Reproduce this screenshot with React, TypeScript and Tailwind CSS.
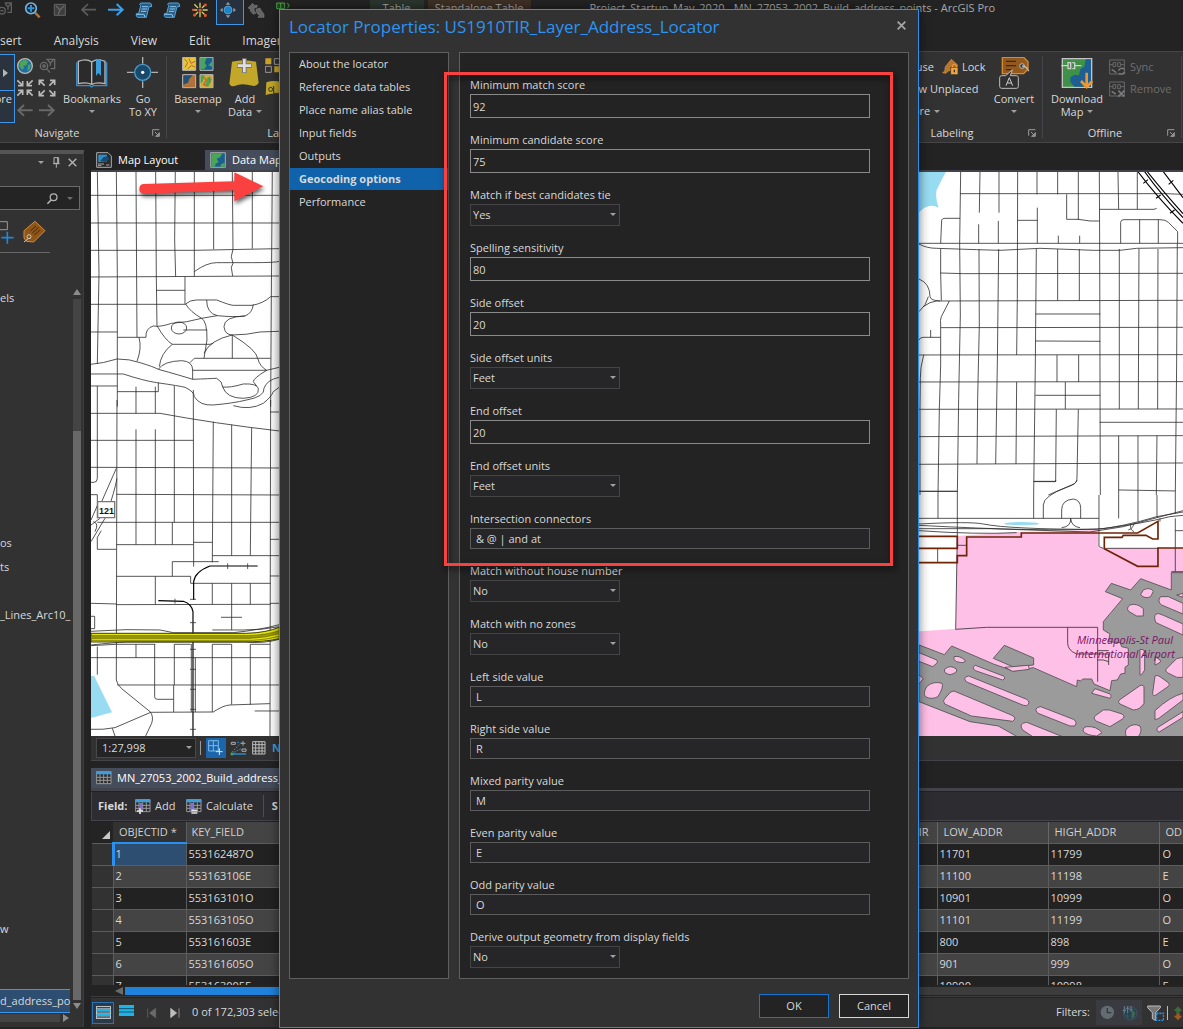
import type { ReactNode } from 'react';
import { clsx } from 'clsx';

const NAV_ITEMS = [
  'About the locator',
  'Reference data tables',
  'Place name alias table',
  'Input fields',
  'Outputs',
  'Geocoding options',
  'Performance',
];

type Field = { label: string; value: string; kind: 'number' | 'select' | 'text' };

const FIELDS: Field[] = [
  { label: 'Minimum match score', value: '92', kind: 'number' },
  { label: 'Minimum candidate score', value: '75', kind: 'number' },
  { label: 'Match if best candidates tie', value: 'Yes', kind: 'select' },
  { label: 'Spelling sensitivity', value: '80', kind: 'number' },
  { label: 'Side offset', value: '20', kind: 'number' },
  { label: 'Side offset units', value: 'Feet', kind: 'select' },
  { label: 'End offset', value: '20', kind: 'number' },
  { label: 'End offset units', value: 'Feet', kind: 'select' },
  { label: 'Intersection connectors', value: '& @ | and at', kind: 'text' },
  { label: 'Match without house number', value: 'No', kind: 'select' },
  { label: 'Match with no zones', value: 'No', kind: 'select' },
  { label: 'Left side value', value: 'L', kind: 'text' },
  { label: 'Right side value', value: 'R', kind: 'text' },
  { label: 'Mixed parity value', value: 'M', kind: 'text' },
  { label: 'Even parity value', value: 'E', kind: 'text' },
  { label: 'Odd parity value', value: 'O', kind: 'text' },
  { label: 'Derive output geometry from display fields', value: 'No', kind: 'select' },
];

const ROWS = [
  ['1', '553162487O', '11701', '11799', 'O'],
  ['2', '553163106E', '11100', '11198', 'E'],
  ['3', '553163101O', '10901', '10999', 'O'],
  ['4', '553163105O', '11101', '11199', 'O'],
  ['5', '553161603E', '800', '898', 'E'],
  ['6', '553161605O', '901', '999', 'O'],
  ['7', '553163005E', '10900', '10998', 'E'],
];

function Caret({ className }: { className?: string }) {
  return (
    <svg viewBox="0 0 6 3" className={clsx('h-[3px] w-[6px] fill-[#a0a0a0]', className)}>
      <path d="M0 0h6L3 3z" />
    </svg>
  );
}

// Every icon is drawn on a grid three times finer than its size on screen.
function Icon({ box, className, children }: { box: string; className: string; children: ReactNode }) {
  return (
    <svg viewBox={box} className={clsx('block shrink-0', className)} fill="none">
      {children}
    </svg>
  );
}

function Scroll({ dx }: { dx: number }) {
  return (
    <g transform={`translate(${dx} 0)`}>
      <path d="M422 9h28q6 1 5 11h-8l-8 32h-26q-6-1-4-11h7l6-24q-6-3 0-8z" fill="#2b5c82" stroke="#4aa6e6" strokeWidth="3" />
      <path d="M426 20h18M425 27h17M423 34h16M410 43h22l3 8" stroke="#8fc8ee" strokeWidth="3" />
    </g>
  );
}

const QUICK_ICONS: { label: string; art: ReactNode }[] = [
  {
    label: 'Zoom to selection',
    art: (
      <g stroke="#5f5f5f" strokeWidth="4">
        <path d="M14 9h20v28h-12" />
        <path d="M16 12l8 9 8-9M24 21v9" />
        <circle cx="6" cy="32" r="10" />
        <path d="M1 32h10" />
      </g>
    ),
  },
  {
    label: 'Zoom in',
    art: (
      <g>
        <path d="M105 38l14 14" stroke="#b27536" strokeWidth="7" />
        <circle cx="93" cy="25" r="16" fill="#232323" stroke="#6fb5e4" strokeWidth="5" />
        <path d="M93 15v20M83 25h20" stroke="#2d95e0" strokeWidth="6" />
      </g>
    ),
  },
  {
    label: 'Full extent',
    art: (
      <g stroke="#666" strokeWidth="3">
        <path d="M163 13h33v33h-33z" fill="#3d3d3d" />
        <path d="M168 18l12 12 12-12M180 30l-6 14" strokeWidth="4" />
      </g>
    ),
  },
  { label: 'Previous extent', art: <path d="M288 29h-42M264 12l-18 17 18 17" stroke="#5c5c5c" strokeWidth="5" /> },
  { label: 'Next extent', art: <path d="M324 29h44M350 12l18 17-18 17" stroke="#3ba0e8" strokeWidth="6" /> },
  { label: 'Run script', art: <Scroll dx={0} /> },
  { label: 'Run model', art: <Scroll dx={84} /> },
  {
    label: 'Explode',
    art: (
      <g>
        <path d="M600 8v15M600 35v17M578 30h14M608 30h15M583 13l11 11M606 36l12 12M617 13l-11 11M594 36l-12 12" stroke="#d8cf6a" strokeWidth="4" />
        <path d="M596 26h9v9h-9zM612 11h8v8h-8zM580 41h8v8h-8zM577 26h7v7h-7zM612 42h8v8h-8z" fill="#e2572b" />
      </g>
    ),
  },
  {
    label: 'Explore',
    art: (
      <g>
        <circle cx="684" cy="30" r="12" fill="#1c84c8" stroke="#65b4e6" strokeWidth="2" />
        <path d="M684 6l7 8h-14zM684 54l7-8h-14zM660 30l8-7v14zM708 30l-8-7v14z" fill="#9a9a9a" />
      </g>
    ),
  },
  {
    label: 'Undo',
    art: (
      <g fill="#646464" stroke="#777" strokeWidth="2">
        <path d="M744 24l14-14 4 6h10l-2 7h-7l-1 8 6 8-8 4-8-9-2-8z" />
        <path d="M768 28l12-4 2 5 10 14v9h-18l4-6q-8-2-10-18z" />
      </g>
    ),
  },
  {
    label: 'Open table',
    art: <path d="M830 9h24v17h-24zM842 9v17M862 9l6 8-6 8" fill="#22481f" stroke="#4d9e4a" strokeWidth="3" />,
  },
];

function QuickAccess() {
  return (
    <div className="-ml-2 flex">
      {QUICK_ICONS.map((item, i) => (
        <button
          key={item.label}
          aria-label={item.label}
          className={clsx('h-[25px] w-7', i === 8 && 'border border-t-0 border-[#3d96ea] bg-[#27313d]')}
        >
          <Icon box={`${-24 + 84 * i} 0 84 75`} className={clsx('h-[25px] w-7', i === 8 && '-mx-px')}>
            {item.art}
          </Icon>
        </button>
      ))}
    </div>
  );
}

function BigButton({ label, second, caret, className, children }: {
  label: string;
  second?: string;
  caret?: boolean;
  className: string;
  children: ReactNode;
}) {
  return (
    <button className={clsx('flex shrink-0 flex-col items-center pt-[5px] leading-[13px] whitespace-nowrap', className)}>
      {children}
      <span className="mt-[3px]">{label}</span>
      <span className="flex h-[13px] items-center gap-1">
        {second}
        {caret && <Caret />}
      </span>
    </button>
  );
}

function RibbonGroup({ label, className, children }: { label: string; className: string; children: ReactNode }) {
  return (
    <section className={clsx('flex shrink-0 flex-col', className)}>
      <div className="flex h-[73px] justify-end">{children}</div>
      <div className="flex h-[18px] items-center">
        <h3 className="flex-1 text-center">{label}</h3>
        <Icon box="0 0 24 24" className="mr-1.5 h-2 w-2">
          <path d="M2 20V2h20M22 10v12H10M9 9l10 10M20 12v8h-8" stroke="#9a9a9a" strokeWidth="3" />
        </Icon>
      </div>
    </section>
  );
}

function Divider() {
  return <div className="my-1 w-px shrink-0 bg-[#47474b]" />;
}

function Ribbon() {
  return (
    <div className="flex h-[92px] shrink-0 overflow-hidden border-y border-[#464648] bg-[#323232] text-[11px]">
      <RibbonGroup label="Navigate" className="-ml-[38px] w-[204px]">
        <button className="mt-0.5 flex h-[69px] w-[46px] shrink-0 flex-col border border-[#3d96ea] bg-[#2a333e]">
          <span className="flex h-9 w-full items-center justify-end border-b border-[#3d96ea] pr-1.5">
            <Icon box="0 0 15 24" className="h-2 w-[5px]">
              <path d="M0 0l15 12L0 24z" fill="#b5b5b5" />
            </Icon>
          </span>
          <span className="w-full pr-0.5 text-right leading-4">ore</span>
        </button>
        <div className="mt-1 grid shrink-0 grid-cols-[22px_22px] grid-rows-[22px_22px_22px]">
          <Icon box="45 168 66 66" className="h-[22px] w-[22px]">
            <circle cx="75" cy="198" r="22" fill="#1f6da3" stroke="#b9b9b9" strokeWidth="4" />
            <path d="M60 187l12-8 12 4-4 12-10 2 2 8-6 4-8-10zM84 196l8-4-2 14-8 8z" fill="#4fa557" />
          </Icon>
          <Icon box="111 168 66 66" className="h-[22px] w-[22px]">
            <g stroke="#6a6a6a" strokeWidth="4">
              <path d="M138 178h26v28h-12M143 180l8 9 9-9M151 189v8" />
              <circle cx="132" cy="198" r="11" fill="#323232" />
              <path d="M126 198h12M132 192v12M140 206l10 12" />
            </g>
          </Icon>
          <Icon box="45 234 66 66" className="h-[22px] w-[22px]">
            <path d="M52 241l14 14M68 243v14H54M98 241l-14 14M82 243v14h14M52 287l14-14M68 285v-14H54M98 287l-14-14M82 285v-14h14" stroke="#b9b9b9" strokeWidth="5" />
          </Icon>
          <Icon box="111 234 66 66" className="h-[22px] w-[22px]">
            <path d="M134 257l-14-14M118 255v-14h14M148 257l14-14M164 255v-14h-14M134 271l-14 14M118 273v14h14M148 271l14 14M164 273v14h-14" stroke="#b9b9b9" strokeWidth="5" />
          </Icon>
          <Icon box="45 300 66 66" className="h-[22px] w-[22px]">
            <path d="M98 331H54M72 315l-17 16 17 16" stroke="#686868" strokeWidth="6" />
          </Icon>
          <Icon box="111 300 66 66" className="h-[22px] w-[22px]">
            <path d="M117 331h44M144 315l17 16-17 16" stroke="#686868" strokeWidth="6" />
          </Icon>
        </div>
        <BigButton label="Bookmarks" caret className="w-[66px]">
          <Icon box="228 171 96 96" className="h-8 w-8">
            <path d="M230 187v70h40l5 4 5-4h40v-70" stroke="#3a8dc9" strokeWidth="4" />
            <path d="M235 184q24-10 40 2 16-12 40-2v67q-24-6-40 2-16-8-40-2zM275 186v66" fill="#2b2b2b" stroke="#b9b9b9" strokeWidth="4" />
            <path d="M288 177h15v51l-8-9-7 9z" fill="#3d9edb" />
          </Icon>
        </BigButton>
        <BigButton label="Go" second="To XY" className="mr-[5px] w-[36px]">
          <Icon box="381 171 96 96" className="h-8 w-8">
            <path d="M428 171v20M428 244v20M381 217h20M454 217h20" stroke="#b0b0b0" strokeWidth="4" />
            <circle cx="428" cy="217" r="24" fill="#1a4a6b" stroke="#4a9cd0" strokeWidth="4" />
            <circle cx="428" cy="217" r="5" fill="#fff" />
          </Icon>
        </BigButton>
      </RibbonGroup>
      <Divider />
      <section className="flex w-[112px] shrink-0 flex-col">
        <div className="flex h-[73px] gap-0.5 pl-1">
          <BigButton label="Basemap" caret className="w-[54px]">
            <Icon box="545 171 96 96" className="h-8 w-8">
              <path d="M547 172h39v39h-39z" fill="#e5c53c" stroke="#b9b9b9" strokeWidth="3" />
              <path d="M552 176l10 12-8 14M566 176l6 14 12-6M562 206l12-10 10 6" stroke="#c5622d" strokeWidth="3" />
              <path d="M599 172h39v39h-39z" fill="#1b5f8f" stroke="#b9b9b9" strokeWidth="3" />
              <path d="M601 174h18l-6 14 6 10-8 10h-10zM624 196l12-12v16z" fill="#4aa657" />
              <path d="M547 224h39v39h-39z" fill="#b3713a" stroke="#b9b9b9" strokeWidth="3" />
              <path d="M549 226h28l-10 10-4 12-14 6z" fill="#244f70" />
              <path d="M599 224h39v39h-39z" fill="#cfae35" stroke="#b9b9b9" strokeWidth="3" />
              <path d="M601 226h12l-6 20-6 4zM622 230l12 8-10 22-8-6z" fill="#4aa657" />
              <path d="M612 232l6 8-8 14 12 4M628 230v20" stroke="#c5622d" strokeWidth="4" />
            </Icon>
          </BigButton>
          <BigButton label="Add" second="Data" caret className="w-[36px]">
            <Icon box="687 171 96 96" className="h-8 w-8">
              <path d="M696 185q34-9 72 0l8 64q-8 12-18 8-34-9-52 0-12 6-18-6z" fill="#c2a728" />
              <path d="M733 175v44M711 197h44" stroke="#777" strokeWidth="14" />
              <path d="M733 177v40M713 197h40" stroke="#dedede" strokeWidth="8" />
            </Icon>
          </BigButton>
          <Icon box="798 171 48 120" className="mt-[5px] h-10 w-4">
            <path d="M799 175h18v18h-18zM826 199h18v18h-18z" fill="#c9a42a" />
            <path d="M826 176h18v17h-18zM799 199h18v18h-18z" stroke="#9a9a9a" strokeWidth="3" />
            <path d="M802 247q24-8 44 0v36q-24-6-46 2z" fill="#c2a728" />
            <circle cx="815" cy="268" r="6" stroke="#333" strokeWidth="3" />
            <path d="M824 258v22h22" stroke="#333" strokeWidth="3" />
          </Icon>
        </div>
        <h3 className="flex h-[18px] items-center justify-end">La</h3>
      </section>

      <div className="flex-1" />

      <RibbonGroup label="Labeling" className="w-[166px]">
        <div className="mt-1 flex w-[99px] shrink-0 flex-col whitespace-nowrap">
          <div className="flex h-[22px] items-center">
            <button className="w-[52px] pl-3.5 text-left">Pause</button>
            <button className="flex items-center gap-[3px]">
              <Icon box="120 172 54 54" className="h-[18px] w-[18px]">
                <path d="M133 198l18-22 18 16v18h-26l-8 8-10-2 6-4z" fill="#b9752b" stroke="#d79a55" strokeWidth="2" />
                <path d="M149 200h22v22h-22z" fill="#f0a63c" stroke="#323232" strokeWidth="2" />
                <path d="M154 200v-6q6-8 12 0v6" stroke="#f0a63c" strokeWidth="3" />
                <path d="M160 207v8" stroke="#333" strokeWidth="4" />
              </Icon>
              Lock
            </button>
          </div>
          <button className="h-[22px] pl-3.5 text-left">View Unplaced</button>
          <button className="flex h-[23px] items-center gap-1 pl-3.5">
            More <Caret />
          </button>
        </div>
        <BigButton label="Convert" caret className="mr-0.5 w-[52px]">
          <Icon box="294 171 96 96" className="h-8 w-8">
            <path d="M307 172h64l13 13v22l-13 14h-64z" fill="#93591d" stroke="#d68a32" strokeWidth="4" />
            <path d="M318 184h30M318 197h30M318 209h18" stroke="#3a2a17" strokeWidth="4" />
            <circle cx="366" cy="198" r="7" fill="#323232" stroke="#bbb" strokeWidth="3" />
            <path d="M366 198q14 0 20 16" stroke="#bbb" strokeWidth="4" />
            <path d="M305 227h12l20-18-6 18h18q6 0 6 6v26q0 6-6 6h-44q-6 0-6-6v-26q0-6 6-6z" fill="#303030" stroke="#bdbdbd" strokeWidth="3" />
            <path d="M318 257l10-24 10 24M322 249h12" stroke="#cfcfcf" strokeWidth="3" />
          </Icon>
        </BigButton>
      </RibbonGroup>
      <Divider />
      <RibbonGroup label="Offline" className="w-[138px]">
        <BigButton label="Download" second="Map" caret className="w-[62px]">
          <Icon box="483 171 96 96" className="h-8 w-8">
            <path d="M487 176h88v86h-88z" fill="#3f9147" stroke="#c4c4c4" strokeWidth="4" />
            <path d="M573 178v82h-50l-12-14v-14l12-8 14 2 4-18 12-8 4-22z" fill="#1d5f93" />
            <path d="M484 197h20M504 188h8v18h-8zM512 188v18M524 188v18h-7M524 188h-7M524 197h20" stroke="#d0d0d0" strokeWidth="4" />
            <path d="M560 218v40M543 243l17 18 17-18" stroke="#f0962c" strokeWidth="8" />
          </Icon>
        </BigButton>
        <div className="mt-1 flex w-[73px] shrink-0 flex-col text-[#6e6e6e]">
          {['Sync', 'Remove'].map((label) => (
            <button key={label} disabled className="flex h-[22px] items-center gap-1">
              <Icon box="627 170 54 54" className="h-[18px] w-[18px]">
                <path d="M632 176h44v42h-44zM630 190h12M642 184v12h8v-12zM656 184h8v12h-8zM664 190h12" stroke="#696969" strokeWidth="3" />
                {label === 'Sync' ? (
                  <path d="M658 208q8-12 18-4M678 212q-8 10-18 4M638 204l14 10" stroke="#7a7a7a" strokeWidth="4" />
                ) : (
                  <path d="M658 202l18 18M676 202l-18 18M638 204l12 8" stroke="#7a7a7a" strokeWidth="5" />
                )}
              </Icon>
              {label}
            </button>
          ))}
        </div>
      </RibbonGroup>
      <Divider />
      <div className="w-px shrink-0" />
    </div>
  );
}

function ContentsPane() {
  return (
    <aside className="flex w-[84px] shrink-0 flex-col overflow-hidden border-t-4 border-r border-t-[#555] border-r-[#3d3d3d] bg-[#323232]">
      <div className="flex h-4 items-center justify-end gap-1.5 pr-1.5">
        <Caret className="h-1 w-2" />
        <Icon box="150 468 36 36" className="h-3 w-3">
          <path d="M162 473h14v17h-14zM159 491h20M169 491v12M173 474v16" stroke="#b5b5b5" strokeWidth="3" />
        </Icon>
        <button aria-label="Close pane">
          <Icon box="0 0 27 27" className="h-[9px] w-[9px]">
            <path d="M2 2l23 23M25 2L2 25" stroke="#b5b5b5" strokeWidth="4" />
          </Icon>
        </button>
      </div>
      <div className="mt-4 mr-[3px] flex h-6 items-center justify-end gap-2 border border-l-0 border-[#6a6a6a] bg-[#242424] pr-1.5">
        <input aria-label="Search contents" className="w-full min-w-0 bg-transparent outline-none" />
        <Icon box="139 155 39 42" className="h-[13px] w-[13px]">
          <circle cx="162" cy="172" r="11" stroke="#b5b5b5" strokeWidth="4" />
          <path d="M154 181l-12 12" stroke="#b5b5b5" strokeWidth="5" />
        </Icon>
        <Caret className="shrink-0 opacity-60" />
      </div>
      <div className="mt-2 flex h-[35px] w-[50px] border-b border-[#666]">
        <Icon box="0 234 144 84" className="h-7 w-12">
          <path d="M0 245h22v24H0" stroke="#9a9a9a" strokeWidth="3" />
          <path d="M22 275v36M4 293h37" stroke="#2586d6" strokeWidth="5" />
          <path d="M72 272l33-28 30 28-34 34-22-2-7-10z" fill="#8f5618" stroke="#cf8a3c" strokeWidth="3" />
          <path d="M92 272l16-14M97 279l18-16M103 285l16-14" stroke="#3a2a17" strokeWidth="3" />
          <circle cx="87" cy="290" r="6" stroke="#c9c9c9" strokeWidth="3" />
          <path d="M84 296l-12 10" stroke="#c9c9c9" strokeWidth="3" />
        </Icon>
      </div>
      <div className="flex min-h-0 flex-1">
        <ul className="w-[70px] shrink-0 pt-[33px] leading-6 whitespace-nowrap">
          <li className="h-6">els</li>
          <li className="mt-[221px] h-6">os</li>
          <li className="h-6">ts</li>
          <li className="mt-6 h-6">_Lines_Arc10_</li>
          <li className="mt-[290px] h-6">w</li>
          <li className="mt-12 h-6 border-y border-[#3d96ea] bg-[#2d4e70] leading-[22px]">d_address_po</li>
        </ul>
        <div className="ml-[3px] flex w-2 shrink-0 flex-col items-center pt-9">
          <svg viewBox="0 0 8 6" className="h-1.5 w-2 shrink-0 fill-[#8c8c8c]">
            <path d="M4 0l4 6H0z" />
          </svg>
          <div className="mt-1 w-2 flex-1 bg-[#444]" />
          <div className="h-[79%] w-2 bg-[#686868]" />
          <svg viewBox="0 0 8 6" className="mt-[3px] h-1.5 w-2 shrink-0 fill-[#8c8c8c]">
            <path d="M4 6l4-6H0z" />
          </svg>
        </div>
      </div>
      <div className="mt-1 mb-1 flex h-2.5 shrink-0 items-center gap-[3px]">
        <div className="h-2 w-[60px] bg-[#444]" />
        <svg viewBox="0 0 6 8" className="h-2 w-1.5 fill-[#8c8c8c]">
          <path d="M0 0l6 4-6 4z" />
        </svg>
      </div>
    </aside>
  );
}

// Street map of the area west and north of the airport.
function MapView() {
  return (
    <svg viewBox="91 172 1092 564" preserveAspectRatio="xMinYMin slice" className="block min-h-0 w-full flex-1 bg-white" fill="none">
      <g transform="translate(0 140) scale(.3333)" stroke="#2b2b2b" strokeWidth="2.4">
        <path d="M273 166H838M273 249H838M273 331H583L838 326M273 411L838 408M273 493H557M273 576H352M352 592H438M292 90L297 400 292 672M349 90L352 400V800M408 90L411 592M467 90L469 411 471 557M526 90L524 300 527 410M583 90V410M641 90V328M697 90L699 328 694 350 699 370 694 382 698 408M757 90V326M817 90L814 480 812 800" />
        <path d="M583 395Q620 368 650 368T755 368 838 364M469 451H555M555 411V492M557 492Q570 480 590 480H650Q690 496 700 496H757Q790 490 812 470H838" />
        <path d="M557 492Q570 515 605 535 622 545 621 600L612 655M620 480Q620 520 652 527 700 532 735 528 757 520 760 493M438 592Q436 565 460 558 480 562 515 550 560 548 605 535L652 527" />
        <ellipse cx="537" cy="564" rx="23" ry="18" />
        <path d="M550 570H622M471 557Q495 600 517 613H630L640 610M517 613Q482 640 478 680M735 528Q672 530 672 560 675 585 697 585 740 585 780 576L838 574M697 585Q630 600 612 640M697 585V655M697 585Q770 630 773 655 780 680 800 691M570 668L583 655H812" />
        <path d="M475 688Q490 664 545 662 578 664 578 690V718M578 691H800L838 682M273 673Q310 670 351 657 390 657 420 668 460 680 475 688 540 706 578 718 630 716 650 715 668 725 668 741 680 775 730 775 780 772 775 745 770 730 730 732 690 744 668 741M800 691Q760 715 760 725L770 738" />
        <path d="M273 702H370Q430 722 470 728 540 738 555 742 583 755 583 770 600 798 640 795 700 790 740 780 795 770 792 745 800 720 838 712M700 797Q750 812 790 790 815 770 820 755L838 742M417 592Q426 625 411 664M273 738H352M352 755H475V728" />
      </g>
      <g transform="translate(0 400) scale(.3333)" stroke="#2b2b2b" strokeWidth="2.4">
        <path d="M273 827l10 2 53 108-63 17z" fill="#98dcf2" stroke="none" />
        <path d="M273 40H480Q640 70 838 93M273 121H580M273 202L838 204M273 284H292M349 283L838 285M292 367H838M349 434H580M580 427H637M637 467H838M517 485H656M349 529H572V550H812M517 485V529M273 610L349 612M349 614L812 613M810 36H838M810 418H838M810 528H838M810 610H838" />
        <path d="M292-42V235Q292 247 282 247H273M292 284V355M304 392L292 412V448H349M351 0L349 840Q352 855 365 866L450 935Q462 950 455 970L437 1008M408-40V40M466-40V40M408 88V434M466 88V434M523-42V367M517 367V434M580-30L581 500M640 65L637 487M695 74V467M755 84L751 467M812 0L810 1008M466 529V614M637 550V613M695 550V690M751 550V613M663 652H726M273 649H284V686H273" />
        <path d="M349 205L305 305M351 235Q345 270 318 350L273 425M295 310L273 360M280 365Q298 370 285 395M300 355L273 375" />
        <path d="M293 305h51v48h-51z" fill="#fff" stroke="#777" strokeWidth="4" />
        <path d="M475 602L550 604Q575 612 579 635V1008M773 498H630Q585 515 581 545V600" stroke="#000" strokeWidth="3.5" />
        <path d="M683 490V507M743 490V507M525 596V611M570 668H588M570 598H588M570 748H588M570 808H588M570 868H588M570 928H588M570 988H588" stroke="#333" />
        <path d="M574 732V936M586 772V936" />
        <path d="M273 700H740Q800 698 838 682V716Q800 726 720 726H273z" fill="#e6e600" stroke="#3c3c00" strokeWidth="3" />
        <path d="M273 711H750Q800 709 838 696" stroke="#9c9a10" strokeWidth="7" />
        <path d="M273 707H745Q800 705 838 692M273 715H750Q800 713 838 701M273 721H760Q800 719 838 709" stroke="#5a5a00" strokeWidth="2" />
        <path d="M273 694Q380 686 480 690L520 698H700Q780 690 838 674M273 735Q340 728 380 726H730Q790 732 838 718M637 690H730Q790 690 838 680" />
        <path d="M349 733L273 737M349 733H466M523 733H572M637 733H695M751 733H810M273 773H812M352 855H838M408 733V773M464 733V890Q464 898 472 898H521V855M523 733V855M521 898V936M637 733V936M695 733V914M751 733V914M450 937L640 936Q670 916 690 915L810 911M764 933H838M450 938L345 983Q310 990 273 988M337 985L345 1008M292 740V824" />
      </g>
      <text x="99" y="514" fontSize="9" fontWeight="700" fill="#111" fontFamily="Liberation Sans, sans-serif">121</text>

      <g transform="translate(910 165) scale(.3333)" stroke="#2b2b2b" strokeWidth="2.4">
        <path d="M0 20H108Q92 50 80 75 75 100 86 128 55 112 27 142L0 150z" fill="#98dcf2" stroke="none" />
        <path d="M150 86H768L819 88M152 20L149 235 151 450 146 700 142 990M210 20L208 143M267 20V143M323 20L322 400 320 570M381 20V88M443 20V88M505 20V165M568 20L569 225 571 990M624 20L626 132M682 20V132M470 88V163H505L540 168H569M569 133H732L740 130" />
        <path d="M382 128V235M323 166H382M206 178V235M265 168V235M92 235L95 165Q97 160 105 160H150M445 212V235M509 212V235M632 235V172Q632 164 642 164H750Q768 164 775 172L803 200V235M689 164V235M745 164V235" />
        <path d="M27 235H819M27 237Q50 250 80 250L200 254 270 256 390 250 550 256H630L680 250 819 248M92 252V325L94 407M207 252L208 480 203 700 201 897M266 252L262 600 257 897M379 252L376 600 371 990M443 252V407M508 252V407M628 252V732M687 252L685 732M744 252L743 732M802 235L800 600 796 990M90 324L160 326 819 325M84 408L819 406M92 488L819 487M27 570L819 569M27 651L819 650M27 733L819 732M27 815L819 812M27 898L819 894" />
        <path d="M376 447H571M376 528L571 529M376 691H571M569 772H819M441 570V651M506 570V651M466 651V732M27 342Q60 355 60 395 62 407 90 408M27 440Q50 420 55 395M40 425Q58 410 84 407M118 408L94 455Q90 465 92 480V600L88 732M27 525Q30 517 40 517H92M62 495V517M41 570Q30 610 31 640L30 732M320 651L318 897M439 733L437 950H371M505 733L501 940Q501 955 485 960L415 990M88 733L84 990M30 733V990M626 812V990M684 812V990M741 812L739 990M27 979H142M626 975L796 978" />
        <path d="M684 20Q740 95 819 175M704 20Q750 85 819 158M712 20Q760 80 819 146M760 20L819 98M700 55L714 44M738 100L752 90M776 58L790 46M780 145L794 135" stroke="#000" strokeWidth="3.4" />
      </g>

      <g transform="translate(910 480) scale(.3333)">
        <path d="M140 168L320 156 560 150 700 160V205H819V771H0V456L138 446z" fill="#ffc0e8" />
        <path d="M565 150h115l62-26v80H586l-21 1z" fill="#fff" />
        <path d="M583 172H640L680 158V166H640L708 166 728 177H744V204H583z" fill="#fff" />
        <path d="M583 206l100 53h60v-54z" fill="#ffc0e8" />
        <ellipse cx="335" cy="131" rx="52" ry="5" fill="#98dcf2" />
        <g fill="#9b9b9b" stroke="#4a4a4a" strokeWidth="2.4">
          <path d="M27 495L103 524 125 498 250 552 310 573 370 563 500 620 502 600 512 603 518 597H545L552 612 600 632 605 602 622 600 632 582 645 580V562L655 555V505L635 500 630 488 595 485 600 462 580 450V425L638 356 586 335 604 310 662 330 692 296 784 330V278H830V775H330L265 738 180 725 27 665z" />
          <path d="M283 496L371 534V555L310 561 250 535z" />
        </g>
        <g fill="#ffc0e8" stroke="#4a4a4a" strokeWidth="2.4">
          <path d="M27 518L80 540Q85 545 80 550L68 560 27 544zM27 585L40 596 27 612zM132 530Q150 526 166 542 164 552 140 545 128 540 132 530zM104 568Q120 552 140 568 142 580 120 584 100 580 104 568zM50 620Q70 602 96 610 102 620 84 650 64 660 46 650 38 640 50 620z" />
          <path d="M196 556L280 588Q290 594 278 600L196 572Q184 562 196 556zM176 588L350 658Q364 668 350 677L340 676 170 606Q156 592 176 588zM134 634L306 706Q322 714 308 724L184 708 104 672Q96 662 106 654L120 638Q126 632 134 634z" />
          <path d="M285 562L355 556 358 568 308 574zM392 680L490 718Q504 726 494 738L480 738 384 700Q368 684 392 680zM350 727L460 771H370L338 750Q324 730 350 727zM530 740Q560 738 576 758L560 768Q530 766 520 754 518 742 530 740z" />
          <path d="M555 626L600 642Q608 648 600 655L545 640zM598 690L636 702Q648 710 636 718L600 740 560 724Q546 714 558 706L580 690zM690 617Q702 612 702 624V670Q690 690 670 690L630 672Q620 664 634 656zM652 744Q670 728 690 738 698 754 684 771H650Q642 754 652 744z" />
          <path d="M735 588Q742 584 750 590L775 608Q782 614 774 620L738 645Q728 650 728 640zM819 532L800 536 768 568Q766 574 772 578L800 592H819zM819 640Q780 650 735 692V718Q740 720 748 714L819 660zM819 695L744 742Q736 752 748 756L819 712zM690 508Q702 506 704 516V570Q694 588 690 585zM735 530L750 540Q758 546 735 555z" />
          <path d="M752 350H775L819 370V402L755 375Q740 364 752 350zM738 402Q744 398 760 406L819 432V465L738 428Q730 410 738 402zM700 330Q720 320 730 334L722 350Q704 358 692 344zM660 375Q680 368 700 386V408L680 408 656 394Q648 384 660 375zM800 345L819 340V352z" />
        </g>
        <g stroke="#2b2b2b" strokeWidth="2.4">
          <path d="M27 115H567M27 132Q180 124 220 132 300 148 560 148 640 140 740 110L819 96M27 136Q400 156 580 146 700 130 780 110L819 106M27 146H240L540 156 640 140 819 92M27 152Q200 164 320 158M27 34H142M142 45V165M84 45V115M371 45V115M437 0V4H371M501 0Q500 12 470 22 400 48 400 75V115M455 115V90Q455 60 490 57 512 60 512 85V115M482 115Q484 140 455 143M482 115Q484 140 510 143M567 45V200L580 205M626 45V115M684 45V124M741 45V112M796 45V100M796 115V275H784" />
          <path d="M142 165L137 448 230 442H563V605M473 442V490Q474 512 500 522H596V555M563 512H596M563 540H580L596 545M142 196H168M83 205V248M586 205H745M750 115V125M796 152H819M796 275H819M655 150Q670 145 672 130M672 155Q660 150 662 135" />
          <path d="M27 169H142V205H27M27 248H142V227H170V171H334V159H683L744 124V177H728L708 166H640L636 172H583V206L683 259H744V204H819" stroke="#6e2405" strokeWidth="5" />
        </g>
      </g>
      <g fontSize="11" fontStyle="italic" fill="#7a1466" textAnchor="middle">
        <text x="1125" y="644">Minneapolis-St Paul</text>
        <text x="1125" y="658">International Airport</text>
      </g>
    </svg>
  );
}

function TableIcon({ mark }: { mark?: 'add' | 'calc' }) {
  return (
    <Icon box="0 0 48 45" className="h-[15px] w-4">
      <path d="M2 2h43v36H2z" fill="#2d2d2d" stroke="#999" strokeWidth="3" />
      <path d="M1 1h45v9H1z" fill="#3d9edb" />
      <path d="M2 19h43M2 28h43M12 10v28M23 10v28M34 10v28" stroke="#999" strokeWidth="3" />
      {mark && <path d="M14 12h8v24h-8z" fill="#7d6be0" />}
      {mark === 'add' && <path d="M15 28v18M6 36h18" stroke="#e2e2e2" strokeWidth="5" />}
      {mark === 'calc' && <path d="M16 34h18M16 42h18" stroke="#e2e2e2" strokeWidth="5" />}
    </Icon>
  );
}

function MapTabs() {
  return (
    <div className="flex h-[22px] shrink-0 border-b-2 border-[#43434b] text-white">
      <button className="flex w-[114px] items-center gap-1.5 pl-[5px]">
        <Icon box="288 456 48 48" className="h-4 w-4">
          <path d="M290 458h34l10 10v34h-44z" fill="#2a2a2a" stroke="#aaa" strokeWidth="3" />
          <path d="M295 464h26v22h-26z" fill="#2e8fcc" />
          <path d="M300 484l10-12 12-4 6 8-10 10z" fill="#174d74" />
          <path d="M294 492h18M294 497h10M318 495h10" stroke="#aaa" strokeWidth="3" />
        </Icon>
        Map Layout
      </button>
      <button className="flex w-[110px] items-center gap-1.5 bg-[#454d5c] pl-[5px]">
        <Icon box="630 456 48 48" className="h-4 w-4">
          <path d="M632 458h44v44h-44z" fill="#1b5f8f" stroke="#aaa" strokeWidth="3" />
          <path d="M634 460h34l-8 12-10 4 6 10-10 6v8h-12z" fill="#4aa657" />
          <path d="M674 488v12h-14l4-8z" fill="#4aa657" />
        </Icon>
        Data Map
      </button>
    </div>
  );
}

function MapStatusBar() {
  return (
    <div className="flex h-[25px] shrink-0 items-center border-b border-[#43434b] bg-[#323232] pl-[5px]">
      <div className="relative h-5 w-[100px]">
        <select aria-label="Map scale" className="h-5 w-full appearance-none border border-[#484848] bg-[#242424] pl-[5px] outline-none">
          <option>1:27,998</option>
        </select>
        <Caret className="pointer-events-none absolute top-2 right-1" />
      </div>
      <div className="ml-1 h-3.5 w-px bg-[#9a9a9a]" />
      <button aria-label="Snapping" className="ml-[5px] h-5 w-5 bg-[#1b66ab]">
        <Icon box="618 23 60 60" className="h-5 w-5">
          <path d="M626 31h29v31h-29zM640 31v31M626 46h29" stroke="#7fb8e6" strokeWidth="3" />
          <path d="M658 54v20M648 64h20" stroke="#e6e6e6" strokeWidth="3" />
        </Icon>
      </button>
      <button aria-label="Edit vertices" className="ml-1">
        <Icon box="688 31 51 48" className="h-4 w-[17px]">
          <path d="M692 38h12v6h-12zM724 58h12v7h-12zM727 34v14M720 41h14" stroke="#aaa" strokeWidth="3" />
          <path d="M694 73h42" stroke="#2d95e0" strokeWidth="4" />
          <path d="M694 68l28-30M700 68l24-12M710 38h8" stroke="#2d95e0" strokeWidth="3" strokeDasharray="5 4" />
          <path d="M690 69h8v8h-8z" fill="#4aa657" />
        </Icon>
      </button>
      <button aria-label="Grid" className="ml-[5px]">
        <Icon box="758 33 42 42" className="h-3.5 w-3.5">
          <path d="M760 35h37v37h-37zM769 35v37M779 35v37M788 35v37M760 44h37M760 54h37M760 63h37" stroke="#bdbdbd" strokeWidth="3" />
        </Icon>
      </button>
      <span className="ml-1.5 font-bold text-[#3d9edb]">N</span>
    </div>
  );
}

function AttributeTable() {
  return (
    <div className="flex h-[259px] shrink-0 flex-col">
      <div className="flex h-5 shrink-0">
        <button className="flex w-[210px] items-center gap-[5px] overflow-hidden bg-[#454d5c] pl-[5px] whitespace-nowrap text-white">
          <TableIcon />
          MN_27053_2002_Build_address_
        </button>
      </div>
      <div className="h-[3px] shrink-0 bg-[#43434b]" />
      <div className="mt-px flex h-[29px] shrink-0 items-center border-b border-l border-[#43434b] bg-[#2c2c31] pl-1.5">
        <span className="w-[37px] font-bold">Field:</span>
        <button className="flex w-[51px] items-center gap-1">
          <TableIcon mark="add" />
          Add
        </button>
        <button className="flex items-center gap-1">
          <TableIcon mark="calc" />
          Calculate
        </button>
        <div className="mr-2 ml-2.5 h-[22px] w-px bg-[#4c4c52]" />
        <span className="font-bold">S</span>
      </div>
      <div className="min-h-0 flex-1 overflow-hidden pt-px pl-px">
        <table className="w-full table-fixed border-collapse text-left">
          <colgroup>
            <col className="w-[21px]" />
            <col className="w-[73px]" />
            <col />
            <col className="w-[110px]" />
            <col className="w-[111px]" />
            <col className="w-[111px]" />
            <col className="w-[24px]" />
          </colgroup>
          <thead>
            <tr className="h-[21px] bg-[#444] text-[#d0d0d0]">
              <th className="bg-[#242424]">
                <Icon box="0 0 24 24" className="mt-1.5 ml-2.5 h-2 w-2">
                  <path d="M24 0v24H0z" fill="#c8c8c8" />
                </Icon>
              </th>
              <th className="border-b-2 border-[#2b8ff0] bg-[#323232] pl-1.5 font-normal">OBJECTID *</th>
              <th className="border-l border-[#5c5c5c] pl-[5px] font-normal">KEY_FIELD</th>
              <th className="pr-2 text-right font-normal">DIR</th>
              <th className="border-l border-[#666] pl-1.5 font-normal">LOW_ADDR</th>
              <th className="border-l border-[#666] pl-1.5 font-normal">HIGH_ADDR</th>
              <th className="border-l border-[#666] pl-1.5 font-normal">OD</th>
            </tr>
          </thead>
          <tbody>
            {ROWS.map(([id, key, low, high, odd], i) => (
              <tr key={id} className={clsx('h-[22px] border-y border-[#5c5c5c]', i % 2 ? 'bg-[#444]' : 'bg-[#222]')}>
                <td className={clsx('bg-[#323232]', i === 0 && 'border-r-3 border-[#2b8ff0]')} />
                <td className={clsx('border-x border-[#5c5c5c]', i === 0 ? 'bg-[#2d4e70] pl-px' : 'pl-0.5')}>{id}</td>
                <td className="pl-0.5">{key}</td>
                <td />
                <td className="border-l border-[#5c5c5c] pl-0.5">{low}</td>
                <td className="border-l border-[#5c5c5c] pl-0.5">{high}</td>
                <td className="border-l border-[#5c5c5c] pl-[3px]">{odd}</td>
              </tr>
            ))}
          </tbody>
        </table>
      </div>
      <div className="flex h-[12px] shrink-0 items-center border-b border-[#3c3c3c] bg-[#242424] pl-6">
        <svg viewBox="0 0 8 8" className="h-2 w-2 fill-[#6a6a6a]">
          <path d="M8 0v8L0 4z" />
        </svg>
        <div className="ml-0.5 h-2 w-[600px] bg-[#1f82dc]" />
        <div className="h-2 flex-1 bg-[#3c3c3c]" />
      </div>
      <div className="mt-px flex h-[29px] shrink-0 items-center bg-[#323232] pl-px">
        <button aria-label="Show all records" className="flex h-[22px] w-[22px] items-center justify-center border border-[#2b72b5] bg-[#2a3a4a]">
          <Icon box="285 825 45 39" className="h-[13px] w-[15px]">
            <path d="M286 826h43v37h-43z" fill="#27313d" stroke="#ddd" strokeWidth="3" />
            <path d="M287 833h41v8h-41zM287 848h41v8h-41z" fill="#1db4e8" />
            <path d="M286 832h43M286 843h43M286 847h43M286 858h43" stroke="#ddd" strokeWidth="2" />
          </Icon>
        </button>
        <button aria-label="Show selected records" className="ml-[5px] pb-1">
          <Icon box="357 821 45 33" className="h-[11px] w-[15px]">
            <path d="M357 821h45v33h-45z" fill="#1db4e8" />
            <path d="M357 832h45M357 842h45" stroke="#15506a" strokeWidth="3" />
          </Icon>
        </button>
        <button aria-label="First record" className="ml-[13px]">
          <Icon box="441 830 30 30" className="h-2.5 w-2.5">
            <path d="M443 831v28M467 831v28l-18-14z" fill="#6a6a6a" stroke="#6a6a6a" strokeWidth="2" />
          </Icon>
        </button>
        <button aria-label="Last record" className="ml-[13px]">
          <Icon box="509 830 30 30" className="h-2.5 w-2.5">
            <path d="M536 831v28M511 831v28l18-14z" fill="#bdbdbd" stroke="#bdbdbd" strokeWidth="2" />
          </Icon>
        </button>
        <span className="ml-3 whitespace-nowrap">0 of 172,303 selected</span>
        <span className="ml-auto">Filters:</span>
        <div className="ml-[6px] flex h-[25px] w-[46px] items-center justify-around bg-[#3a3a41]">
          <Icon box="570 793 45 45" className="h-[15px] w-[15px]">
            <circle cx="592" cy="815" r="20" fill="#646c72" />
            <path d="M592 802v14h12" stroke="#33383c" strokeWidth="4" />
          </Icon>
          <Icon box="638 790 48 48" className="h-4 w-4">
            <circle cx="663" cy="815" r="20" fill="#284254" stroke="#4a5f6c" strokeWidth="2" />
            <path d="M668 805l10 8-4 14-8 4zM650 818l8 4-2 8z" fill="#3e6a4c" />
            <path d="M645 793v22M655 793v22M665 793v18M640 806h10M651 800h9M661 804h9" stroke="#6c7f8b" strokeWidth="3" />
          </Icon>
        </div>
        <button aria-label="Filter by extent" className="ml-[5px]">
          <Icon box="710 790 51 48" className="h-4 w-[17px]">
            <path d="M712 793h38v5l-14 15v24l-10-6v-18l-14-15z" fill="#777" stroke="#bdbdbd" strokeWidth="3" />
            <path d="M738 815h22v22h-22z" stroke="#2d95e0" strokeWidth="5" strokeDasharray="6 3" />
          </Icon>
        </button>
        <div className="ml-[3px] h-3.5 w-px bg-[#bdbdbd]" />
        <Icon box="790 790 30 48" className="ml-[5px] h-4 w-2.5">
          <path d="M792 808l13-14 13 14h-8v8h-10v-8z" fill="#3e6a3c" />
          <path d="M792 822l13 14 13-14h-8v-6h-10v6z" fill="#a05a24" />
        </Icon>
      </div>
    </div>
  );
}

function FieldRow({ label, value, kind }: Field) {
  const id = label.toLowerCase().replace(/ /g, '-');
  return (
    <div className="mb-[13px]">
      <label htmlFor={id} className="block h-[18px] leading-[18px]">
        {label}
      </label>
      {kind === 'select' && (
        <div className="relative w-[150px]">
          <select id={id} className="block h-[22px] w-full appearance-none border border-[#454547] bg-[#262628] pl-0.5 outline-none">
            <option>{value}</option>
          </select>
          <Caret className="pointer-events-none absolute top-[9px] right-1" />
        </div>
      )}
      {kind === 'number' && (
        <input id={id} defaultValue={value} className="block h-6 w-full border border-[#8a8a8a] bg-[#232323] pl-0.5 outline-none" />
      )}
      {kind === 'text' && (
        <input id={id} defaultValue={value} className="block h-[21px] w-full border border-[#5c5c5c] bg-[#262628] pl-[5px] outline-none" />
      )}
    </div>
  );
}

function LocatorDialog() {
  return (
    <div
      role="dialog"
      aria-labelledby="dialog-title"
      className="absolute top-[9px] left-[279px] w-[640px] border border-[#2b8ff0] bg-[#323232] px-[9px] pb-[9px] shadow-[0_0_10px_rgba(0,0,0,0.55)]"
    >
      <div className="flex h-[42px] items-start justify-between pt-[5px]">
        <h2 id="dialog-title" className="text-[17px] leading-6 text-[#2b94f3]">
          Locator Properties: US1910TIR_Layer_Address_Locator
        </h2>
        <button aria-label="Close" className="mt-1.5 mr-[3px]">
          <Icon box="0 0 27 27" className="h-[9px] w-[9px]">
            <path d="M2 2l23 23M25 2L2 25" stroke="#a8a8a8" strokeWidth="5" />
          </Icon>
        </button>
      </div>
      <div className="flex gap-2.5">
        <nav className="flex w-[160px] flex-col gap-px border border-[#5f5f5f] bg-[#232323]">
          {NAV_ITEMS.map((item) => (
            <a
              key={item}
              href="#"
              className={clsx('h-[22px] pl-[9px] leading-[22px]', item === 'Geocoding options' && 'bg-[#1062aa] font-bold')}
            >
              {item}
            </a>
          ))}
        </nav>
        <form className="flex-1 border border-[#5f5f5f] bg-[#232323] pt-[23px] pr-[38px] pl-2.5">
          <div className="-mb-[3px]">
            {FIELDS.map((field) => (
              <FieldRow key={field.label} {...field} />
            ))}
          </div>
        </form>
      </div>
      <div className="mt-[15px] flex justify-end gap-2.5">
        <button className="h-6 w-[70px] border border-[#1176d2] bg-[#232323]">OK</button>
        <button className="h-6 w-[70px] border border-[#d6d6d6] bg-[#232323]">Cancel</button>
      </div>
    </div>
  );
}

function Annotations() {
  return (
    <>
      <div className="pointer-events-none absolute top-[72px] left-[444px] h-[494px] w-[449px] border-3 border-[#fb4040] drop-shadow-[2px_3px_3px_rgba(0,0,0,0.7)]" />
      <svg viewBox="405 90 396 108" className="pointer-events-none absolute top-[170px] left-[135px] h-9 w-33 drop-shadow-[1px_3px_2px_rgba(0,0,0,0.6)]">
        <path d="M430 132L703 124V97L790 139 703 184V151L432 161Q418 160 418 147 418 133 430 132z" fill="#fb4040" />
      </svg>
    </>
  );
}

export default function App() {
  return (
    <div className="relative flex h-screen flex-col overflow-hidden bg-[#232323] font-['Open_Sans','Noto_Sans',sans-serif] text-[11px] text-[#d8d8d8]">
      <header className="flex h-7 shrink-0 items-start whitespace-nowrap text-[#a8a8a8]">
        <QuickAccess />
        <span className="ml-3 leading-[15px]">–</span>
        <span className="ml-[52px] w-[54px] bg-[#2b352d] text-center leading-4">Table</span>
        <span className="ml-1 w-[103px] bg-[#3d3025] text-center leading-4">Standalone Table</span>
        <h1 className="ml-[59px] leading-4">Project_Startup_May_2020 - MN_27053_2002_Build_address_points - ArcGIS Pro</h1>
      </header>
      <nav className="flex h-[23px] shrink-0 items-center gap-8 pt-0.5 text-xs">
        {['sert', 'Analysis', 'View', 'Edit', 'Imagery'].map((tab) => (
          <a key={tab} href="#">
            {tab}
          </a>
        ))}
      </nav>
      <Ribbon />
      <div className="flex min-h-0 flex-1 gap-[7px] pt-[7px] pb-0.5">
        <ContentsPane />
        <main className="flex min-w-0 flex-1 flex-col">
          <MapTabs />
          <MapView />
          <MapStatusBar />
          <div className="h-[7px] shrink-0" />
          <AttributeTable />
        </main>
      </div>
      <LocatorDialog />
      <Annotations />
    </div>
  );
}
